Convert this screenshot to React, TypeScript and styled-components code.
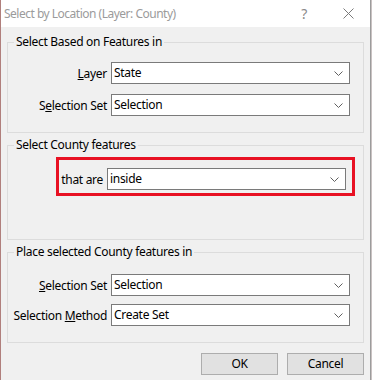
import styled, {createGlobalStyle} from 'styled-components';

const GlobalStyle = createGlobalStyle`
  html, body {
    margin: 0;
    padding: 0;
    background: #c9c2c2;
  }
  body {
    font-family: "Noto Sans", "Open Sans", sans-serif;
    font-size: 12px;
    letter-spacing: -0.3px;
    color: #000;
  }
`;

const Window = styled.div`
  width: 369px;
  height: 380px;
  border-left: 1px solid #b07f7c;
  border-right: 1px solid #9c9c9c;
  background: #f0f0f0;
  display: flex;
  flex-direction: column;
  overflow: hidden;
`;

const TitleBar = styled.div`
  height: 27px;
  background: #fff;
  display: flex;
  align-items: center;
  padding-left: 3px;
  color: #9b9b9b;
  font-size: 12px;
  letter-spacing: -0.5px;
`;

const Title = styled.span`
  flex: 1;
  padding-bottom: 1px;
`;

const HelpGlyph = styled.span`
  width: 12px;
  margin-right: 33px;
  font-size: 14px;
  color: #8a8a8a;
  text-align: center;
`;

const CloseButton = styled.span`
  width: 11px;
  height: 11px;
  margin-right: 16px;
  display: flex;

  svg {
    width: 100%;
    height: 100%;
  }
`;

const Body = styled.div`
  padding: 7px 6px 0 6px;
  display: flex;
  flex-direction: column;
`;

const Group = styled.fieldset<{$top: number; $bottom: number; $gap: number}>`
  margin: 0 0 4px 0;
  border: 1px solid #dcdcdc;
  padding: ${(p) => p.$top}px 0 ${(p) => p.$bottom}px 0;
  display: flex;
  flex-direction: column;
  gap: ${(p) => p.$gap}px;
  min-inline-size: 0;
`;

const Legend = styled.legend`
  margin-left: 6px;
  padding: 0 2px;
  line-height: 16px;
  font-size: 12px;
`;

const Row = styled.div`
  display: flex;
  align-items: center;
  gap: 4px;
`;

const Label = styled.span<{$width: number}>`
  width: ${(p) => p.$width}px;
  text-align: right;
  white-space: nowrap;
`;

const Combo = styled.div`
  width: 235px;
  height: 20px;
  border: 1px solid #7a7a7a;
  background: #fff;
  display: flex;
  align-items: center;
  padding-left: 2px;
  box-sizing: content-box;
`;

const ComboText = styled.span`
  flex: 1;
  padding-bottom: 1px;
`;

const Chevron = styled.svg`
  width: 9px;
  height: 5px;
  margin-right: 6px;
`;

const Highlight = styled.div`
  margin: 2px 8px 0 48px;
  border: 3px solid #e81123;
  padding: 8px 3px 3px 0;
  display: flex;
  flex-direction: column;
`;

const Footer = styled.div`
  display: flex;
  justify-content: flex-end;
  gap: 9px;
  margin-top: 6px;
`;

const Button = styled.button`
  width: 77px;
  height: 22px;
  background: #e1e1e1;
  border: 1px solid #adadad;
  font-family: inherit;
  font-size: 12px;
  letter-spacing: inherit;
  color: #000;
  padding: 0 0 1px 0;
`;

function ComboBox({value}: {value: string}) {
  return (
    <Combo>
      <ComboText>{value}</ComboText>
      <Chevron viewBox="0 0 9 5">
        <path d="M0.5 0.5 L4.5 4.5 L8.5 0.5" fill="none" stroke="#606060" strokeWidth="1" />
      </Chevron>
    </Combo>
  );
}

export default function App() {
  return (
    <>
      <GlobalStyle />
      <Window>
        <TitleBar>
          <Title>Select by Location (Layer: County)</Title>
          <HelpGlyph>?</HelpGlyph>
          <CloseButton>
            <svg viewBox="0 0 11 11">
              <path d="M0.5 0.5 L10.5 10.5 M10.5 0.5 L0.5 10.5" stroke="#7a7a7a" strokeWidth="1" />
            </svg>
          </CloseButton>
        </TitleBar>
        <Body>
          <Group $top={12} $bottom={16} $gap={10}>
            <Legend>Select Based on Features in</Legend>
            <Row>
              <Label $width={99}>
                <u>L</u>ayer
              </Label>
              <ComboBox value="State" />
            </Row>
            <Row>
              <Label $width={99}>
                S<u>e</u>lection Set
              </Label>
              <ComboBox value="Selection" />
            </Row>
          </Group>

          <Group $top={2} $bottom={43} $gap={0}>
            <Legend>Select County features</Legend>
            <Highlight>
              <Row>
                <Label $width={44}>that are</Label>
                <ComboBox value="inside" />
              </Row>
            </Highlight>
          </Group>

          <Group $top={14} $bottom={16} $gap={8}>
            <Legend>Place selected County features in</Legend>
            <Row>
              <Label $width={99}>
                <u>S</u>election Set
              </Label>
              <ComboBox value="Selection" />
            </Row>
            <Row>
              <Label $width={99}>
                Selection <u>M</u>ethod
              </Label>
              <ComboBox value="Create Set" />
            </Row>
          </Group>

          <Footer>
            <Button>OK</Button>
            <Button>Cancel</Button>
          </Footer>
        </Body>
      </Window>
    </>
  );
}
